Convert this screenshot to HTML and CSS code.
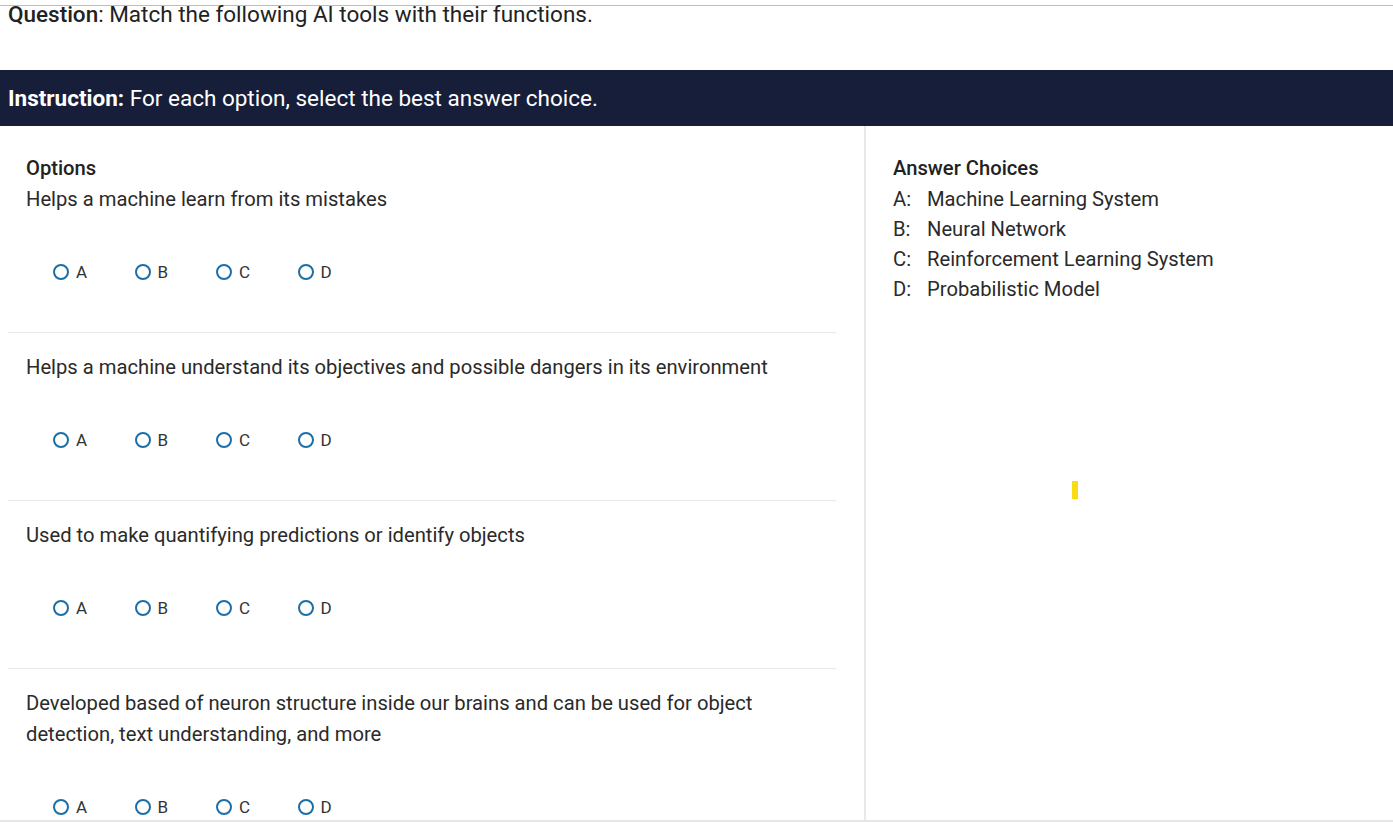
FILE: index.html
```html
<!DOCTYPE html>
<html>
<head>
<meta charset="utf-8">
<link rel="stylesheet" href="styles.css">
</head>
<body>
<div class="page">
  <div class="top-gap"></div>
  <div class="question"><span class="q-label">Question</span>: Match the following AI tools with their functions.</div>
  <div class="instruction"><span class="i-label">Instruction:</span> For each option, select the best answer choice.</div>
  <div class="main">
    <div class="left">
      <div class="heading">Options</div>
      <div class="item first">
        <div class="prompt">Helps a machine learn from its mistakes</div>
        <div class="radios">
          <label class="radio"><span class="circle"></span>A</label>
          <label class="radio"><span class="circle"></span>B</label>
          <label class="radio"><span class="circle"></span>C</label>
          <label class="radio"><span class="circle"></span>D</label>
        </div>
      </div>
      <div class="item">
        <div class="prompt">Helps a machine understand its objectives and possible dangers in its environment</div>
        <div class="radios">
          <label class="radio"><span class="circle"></span>A</label>
          <label class="radio"><span class="circle"></span>B</label>
          <label class="radio"><span class="circle"></span>C</label>
          <label class="radio"><span class="circle"></span>D</label>
        </div>
      </div>
      <div class="item">
        <div class="prompt">Used to make quantifying predictions or identify objects</div>
        <div class="radios">
          <label class="radio"><span class="circle"></span>A</label>
          <label class="radio"><span class="circle"></span>B</label>
          <label class="radio"><span class="circle"></span>C</label>
          <label class="radio"><span class="circle"></span>D</label>
        </div>
      </div>
      <div class="item">
        <div class="prompt">Developed based of neuron structure inside our brains and can be used for object detection, text understanding, and more</div>
        <div class="radios">
          <label class="radio"><span class="circle"></span>A</label>
          <label class="radio"><span class="circle"></span>B</label>
          <label class="radio"><span class="circle"></span>C</label>
          <label class="radio"><span class="circle"></span>D</label>
        </div>
      </div>
    </div>
    <div class="right">
      <div class="heading">Answer Choices</div>
      <div class="choice"><span class="letter">A:</span><span>Machine Learning System</span></div>
      <div class="choice"><span class="letter">B:</span><span>Neural Network</span></div>
      <div class="choice"><span class="letter">C:</span><span>Reinforcement Learning System</span></div>
      <div class="choice"><span class="letter">D:</span><span>Probabilistic Model</span></div>
      <div class="marker"></div>
    </div>
  </div>
</div>
</body>
</html>
```

FILE: styles.css
```css
html, body {
  margin: 0;
  padding: 0;
  background: #fff;
  overflow: hidden;
}

body {
  font-family: Roboto, "Liberation Sans", Arial, sans-serif;
  color: #2a2a2a;
}

.page {
  width: 1393px;
  height: 823px;
  overflow: hidden;
}

.top-gap {
  height: 5px;
}

.question {
  border-top: 1px solid #bdbdbd;
  height: 65px;
  box-sizing: border-box;
  padding-left: 8px;
  font-size: 22.5px;
  line-height: 17px;
  color: #222;
}

.q-label {
  font-weight: 500;
}

.instruction {
  height: 56px;
  background: #171e3a;
  color: #fff;
  font-size: 22.5px;
  line-height: 56px;
  padding-left: 8px;
}

.i-label {
  font-weight: 700;
}

.main {
  display: flex;
  height: 694px;
  border-bottom: 2px solid #e6e6e6;
  overflow: hidden;
}

.left {
  width: 866px;
  flex: none;
  box-sizing: border-box;
  padding: 26.5px 28px 0 8px;
  border-right: 2px solid #e8e8e8;
}

.heading {
  font-size: 20.2px;
  font-weight: 500;
  line-height: 31px;
  color: #222;
}

.left .heading {
  padding-left: 18px;
}

.item {
  padding: 19px 0 48px 18px;
  border-top: 1px solid #e8e8e8;
}

.item.first {
  padding-top: 0;
  border-top: none;
}

.prompt {
  font-size: 20.2px;
  line-height: 31px;
  color: #2a2a2a;
  padding-right: 40px;
}

.radios {
  display: flex;
  margin-top: 45px;
  height: 24px;
  align-items: center;
  padding-left: 27px;
}

.radio {
  display: flex;
  align-items: center;
  width: 81.5px;
  font-size: 17px;
  color: #333;
}

.circle {
  width: 12px;
  height: 12px;
  border: 2px solid #1b6fa8;
  border-radius: 50%;
  margin-right: 7px;
  flex: none;
}

.right {
  flex: 1;
  position: relative;
  padding: 26.5px 0 0 27px;
}

.choice {
  display: flex;
  font-size: 20.2px;
  line-height: 30.3px;
  color: #2a2a2a;
}

.letter {
  width: 34px;
  flex: none;
}

.marker {
  position: absolute;
  left: 206px;
  top: 355px;
  width: 6px;
  height: 18px;
  background: #f7dc16;
}
```
